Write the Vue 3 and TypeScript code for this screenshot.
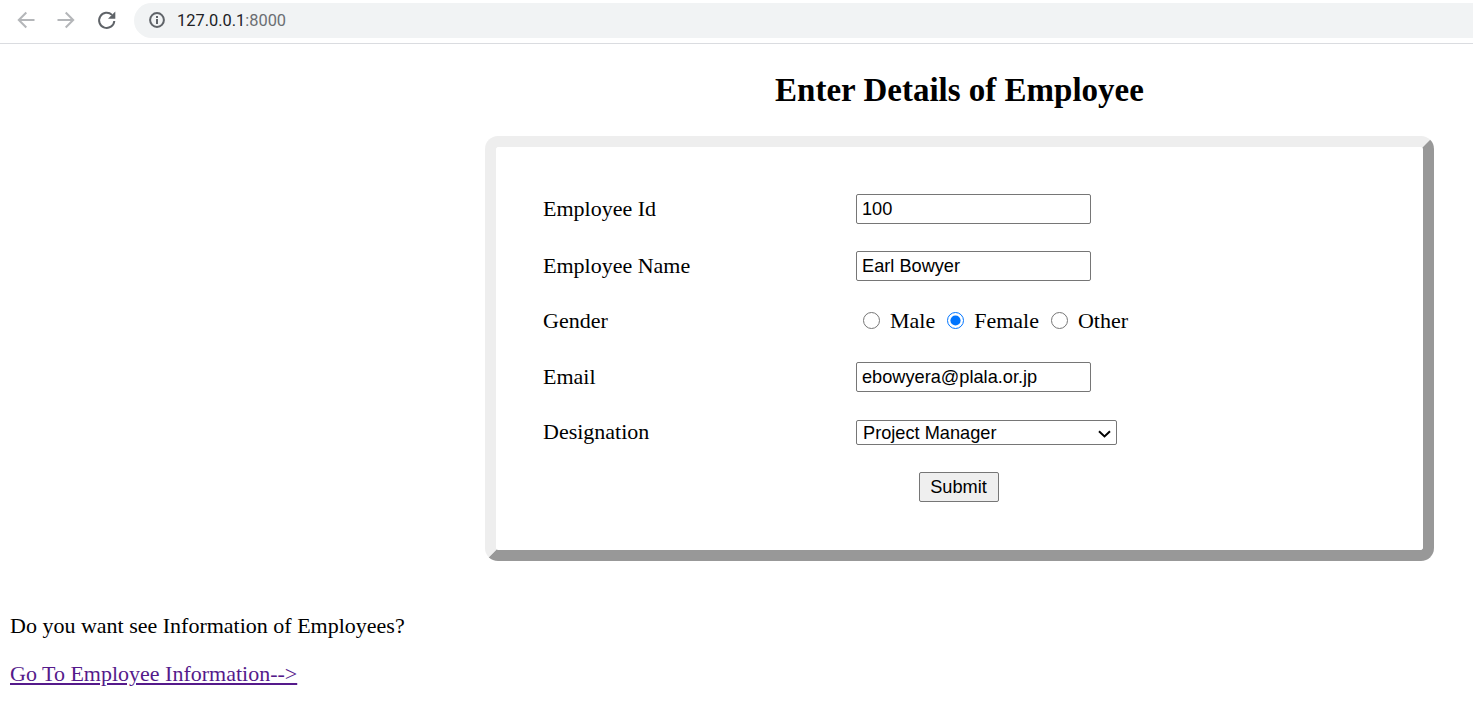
<script setup lang="ts">
const gender = 'Female'
const genders: string[] = ['Male', 'Female', 'Other']
</script>

<template>
  <div class="page">
    <header class="toolbar">
      <button class="nav" aria-label="Back">
        <svg width="20" height="20" viewBox="0 0 20 20"><path d="M18.500 10H3.500M10.300 2.500 2.800 10l7.500 7.500" fill="none" stroke="#b4b6b9" stroke-width="2"/></svg>
      </button>
      <button class="nav" aria-label="Forward">
        <svg width="20" height="20" viewBox="0 0 20 20"><path d="M1.500 10h15M9.700 2.500l7.500 7.500-7.500 7.500" fill="none" stroke="#b4b6b9" stroke-width="2"/></svg>
      </button>
      <button class="nav" aria-label="Reload">
        <svg width="20" height="20" viewBox="0 0 20 20"><path d="M17.300 11A7.600 7.600 0 1 1 15 4.900" fill="none" stroke="#5f6368" stroke-width="2"/><path d="M18.300 1.500V8.800h-7.300z" fill="#5f6368"/></svg>
      </button>
      <div class="omnibox">
        <svg class="info" width="18" height="18" viewBox="0 0 18 18"><circle cx="9" cy="9" r="6.900" fill="none" stroke="#5f6368" stroke-width="2"/><rect x="8" y="8" width="2" height="5" fill="#5f6368"/><rect x="8" y="5" width="2" height="2" fill="#5f6368"/></svg>
        <span class="host">127.0.0.1</span><span class="port">:8000</span>
      </div>
    </header>

    <main class="content">
      <section class="panel-wrap">
        <h1 class="title">Enter Details of Employee</h1>
        <form class="card" @submit.prevent>
          <div class="row">
            <label class="label">Employee Id</label>
            <input class="text" type="text" value="100" />
          </div>
          <div class="row row-name">
            <label class="label">Employee Name</label>
            <input class="text" type="text" value="Earl Bowyer" />
          </div>
          <div class="row row-gender">
            <span class="label">Gender</span>
            <div class="radios">
              <label v-for="g in genders" :key="g" class="radio">
                <input type="radio" name="gender" :value="g" :checked="g === gender" />
                <span>{{ g }}</span>
              </label>
            </div>
          </div>
          <div class="row row-email">
            <label class="label">Email</label>
            <input class="text" type="text" value="ebowyera@plala.or.jp" />
          </div>
          <div class="row row-select">
            <label class="label">Designation</label>
            <div class="select-wrap">
              <select class="select">
                <option>Project Manager</option>
              </select>
              <svg class="chevron" width="13" height="8" viewBox="0 0 13 8"><path d="M1 1.200 6.500 6.400 12 1.200" fill="none" stroke="#000" stroke-width="2"/></svg>
            </div>
          </div>
          <div class="actions">
            <button class="submit" type="submit">Submit</button>
          </div>
        </form>
      </section>

      <p class="question">Do you want see Information of Employees?</p>
      <p class="link-line"><a class="link" href="#">Go To Employee Information--&gt;</a></p>
    </main>
  </div>
</template>

<style>
html, body { margin: 0; background: #fff; }
</style>

<style scoped>
.page {
  font-family: "Liberation Serif", serif;
  font-size: 22px;
  color: #000;
}
.toolbar {
  display: flex;
  align-items: center;
  height: 43px;
  border-bottom: 1px solid #dadce0;
  box-sizing: content-box;
  padding-left: 6px;
}
.nav {
  width: 40px;
  height: 40px;
  margin-top: -3px;
  padding: 0;
  border: 0;
  background: none;
  display: flex;
  align-items: center;
  justify-content: center;
}
.nav:nth-child(3) { padding-left: 1px; }
.omnibox {
  margin-left: 8px;
  flex: 1;
  height: 35px;
  margin-top: -3px;
  border-radius: 18px 0 0 18px;
  background: #f1f3f4;
  display: flex;
  align-items: center;
  padding-left: 14px;
  font-family: "Roboto", "Liberation Sans", sans-serif;
  font-size: 16.4px;
}
.info { margin-right: 11px; }
.host { color: #202124; }
.port { color: #6b6e72; }
.content { padding: 0 10px; }
.panel-wrap {
  margin: 0 29px 0 475px;
}
.title {
  margin: 28px 0 27px;
  font-size: 33px;
  line-height: 37px;
  font-weight: 700;
  text-align: center;
}
.card {
  box-sizing: border-box;
  height: 425px;
  border-width: 11px;
  border-style: solid;
  border-color: #eeeeee #989898 #989898 #eeeeee;
  border-radius: 13px;
  padding: 47px 47px 0;
}
.row {
  display: grid;
  grid-template-columns: 313px 1fr;
  align-items: center;
  height: 30px;
  margin-bottom: 27px;
}
.row-name { margin-bottom: 25px; }
.row-gender { margin-bottom: 26px; }
.row-email { margin-bottom: 25px; }
.row-select { margin-bottom: 25px; }
.text {
  box-sizing: border-box;
  width: 235px;
  height: 30px;
  padding: 1px 5px;
  border: 1px solid #767676;
  border-radius: 2px;
  font-family: "Liberation Sans", sans-serif;
  font-size: 18.2px;
  color: #000;
  background: #fff;
}
.radios { display: flex; padding-left: 7px; }
.radio { display: flex; align-items: center; margin-right: 12px; }
.radio input {
  width: 17px;
  height: 17px;
  margin: 0 10px 2px 0;
}
.select-wrap {
  position: relative;
  width: 261px;
  height: 25px;
}
.select {
  appearance: none;
  display: block;
  box-sizing: border-box;
  width: 261px;
  height: 25px;
  padding: 2px 0 0 6px;
  border: 1px solid #767676;
  border-radius: 2px;
  font-family: "Liberation Sans", sans-serif;
  font-size: 18.2px;
  background: #fff;
  color: #000;
}
.chevron {
  position: absolute;
  right: 6px;
  top: 10px;
  pointer-events: none;
}
.actions { display: flex; justify-content: center; padding-right: 2px; }
.submit {
  box-sizing: border-box;
  width: 80px;
  height: 30px;
  padding: 0;
  border: 1px solid #767676;
  border-radius: 2px;
  background: #efefef;
  font-family: "Liberation Sans", sans-serif;
  font-size: 18.2px;
  color: #000;
}
.question { margin: 53px 0 0; line-height: 24px; }
.link-line { margin: 24px 0 0; line-height: 24px; }
.link { color: #551a8b; }
</style>
